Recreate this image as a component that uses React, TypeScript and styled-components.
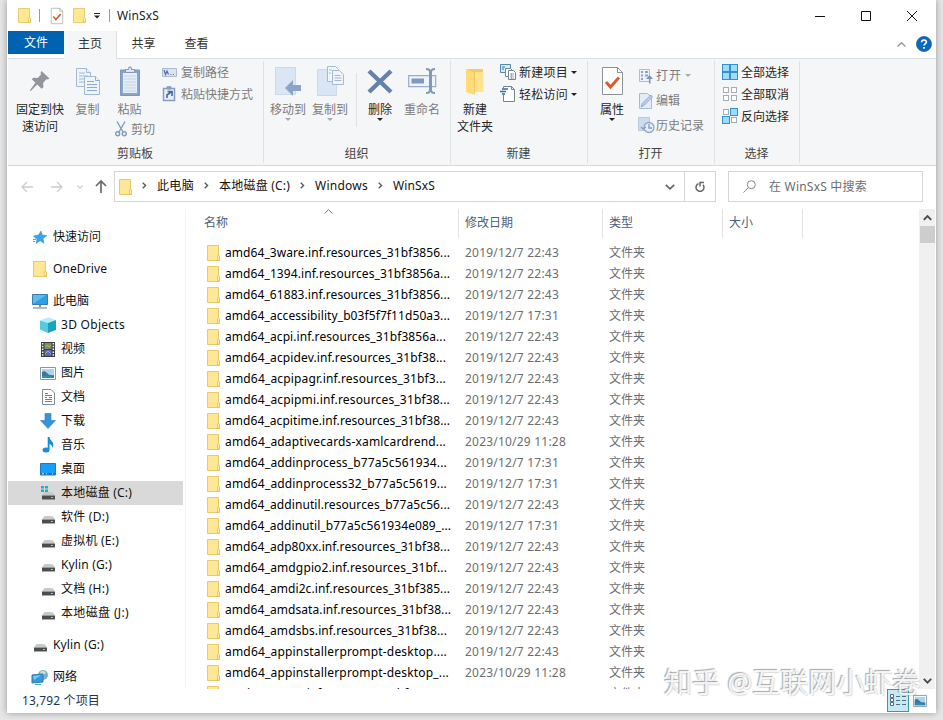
import React, { useLayoutEffect, useRef, useState } from "react";
import styled, { createGlobalStyle } from "styled-components";

const GlobalStyle = createGlobalStyle`
  * { box-sizing: border-box; }
  html, body { margin: 0; padding: 0; background: #e6e6e6; overflow: hidden; }
  body, #root { font-family: "Noto Sans", "Noto Sans CJK SC", sans-serif; font-size: 12px; color: #1c1c1c; }
  svg { display: block; flex: none; overflow: visible; }
`;

/* ---------- text that is tracked to a fixed measure ---------- */
const TextLine = styled.span<{ $w: number; $size?: number }>`
  display: block;
  flex: none;
  width: ${(p) => p.$w}px;
  font-size: ${(p) => p.$size ?? 12}px;
  white-space: pre;
  line-height: 17px;
`;

function Label({ w, size, children }: { w: number; size?: number; children: string }) {
  const ref = useRef<HTMLSpanElement>(null);
  const [tracking, setTracking] = useState(0);
  useLayoutEffect(() => {
    const el = ref.current;
    if (el) setTracking((w - el.getBoundingClientRect().width) / children.length);
  }, [w, size, children]);
  return (
    <TextLine $w={w} $size={size}>
      <span ref={ref} style={{ letterSpacing: `${tracking}px` }}>{children}</span>
    </TextLine>
  );
}

/* ---------- window ---------- */
const Desktop = styled.div`
  width: 943px;
  height: 720px;
  padding: 0 7px 7px 7px;
  background: #e6e6e6;
  overflow: hidden;
`;
const Window = styled.div`
  position: relative;
  width: 929px;
  height: 713px;
  padding-left: 1px;
  display: flex;
  flex-direction: column;
  background: #fff;
  box-shadow: 0 0 7px rgba(0, 0, 0, 0.35);
`;

const TitleBar = styled.header`
  display: flex;
  align-items: center;
  height: 31px;
  padding-left: 10px;
`;
const QuickTools = styled.div`
  display: flex;
  align-items: center;
  width: 99px;
`;
const ToolSlot = styled.div<{ $w: number }>`
  width: ${(p) => p.$w}px;
  display: flex;
  align-items: center;
  flex: none;
`;
const Tick = styled.i`
  width: 1px;
  height: 13px;
  background: #9b9b9b;
`;
const Caption = styled.div`
  display: flex;
  align-items: center;
  margin-left: auto;
  padding-right: 19px;
  gap: 36px;
`;

const TabBar = styled.nav`
  display: flex;
  align-items: flex-start;
  height: 27px;
  flex: none;
`;
const FileTab = styled.div`
  display: flex;
  justify-content: center;
  align-items: center;
  width: 56px;
  height: 23px;
  background: #0063b1;
  color: #fff;
`;
const Tab = styled.div<{ $active?: boolean; $w: number }>`
  display: flex;
  justify-content: center;
  align-items: center;
  width: ${(p) => p.$w}px;
  height: ${(p) => (p.$active ? 28 : 27)}px;
  padding-bottom: ${(p) => (p.$active ? 3 : 2)}px;
  background: ${(p) => (p.$active ? "#f5f6f7" : "transparent")};
  border-right: ${(p) => (p.$active ? "1px solid #dfe1e3" : "0")};
  color: #333;
  z-index: 1;
`;
const TabTools = styled.div`
  margin-left: auto;
  display: flex;
  align-items: center;
  gap: 10px;
  padding: 5px 4px 0 0;
`;

/* ---------- ribbon ---------- */
const Ribbon = styled.section`
  display: flex;
  height: 108px;
  flex: none;
  background: #f5f6f7;
  border-top: 1px solid #dcdfe1;
  border-bottom: 1px solid #d5d8da;
`;
const Group = styled.div<{ $w: number }>`
  width: ${(p) => p.$w}px;
  display: flex;
  flex-direction: column;
  height: 102px;
  margin-top: 2px;
  border-right: 1px solid #dfe2e4;
`;
const GroupBody = styled.div<{ $left: number }>`
  display: flex;
  height: 84px;
  padding-left: ${(p) => p.$left}px;
`;
const GroupName = styled.div`
  display: flex;
  justify-content: center;
  padding-right: 1px;
  color: #444;
`;
const BigButton = styled.div<{ $w: number; $dim?: boolean }>`
  width: ${(p) => p.$w}px;
  display: flex;
  flex: none;
  flex-direction: column;
  align-items: center;
  color: ${(p) => (p.$dim ? "#7c7c7c" : "#262626")};
`;
const BigIcon = styled.div`
  height: 40px;
  display: flex;
  align-items: center;
`;
const Stack = styled.div<{ $left?: number; $top?: number }>`
  display: flex;
  flex: none;
  flex-direction: column;
  margin-left: ${(p) => p.$left ?? 0}px;
  padding-top: ${(p) => p.$top ?? 0}px;
`;
const SmallButton = styled.div<{ $h?: number; $dim?: boolean; $gap?: number; $indent?: number }>`
  display: flex;
  align-items: center;
  height: ${(p) => p.$h ?? 22}px;
  gap: ${(p) => p.$gap ?? 3}px;
  padding-left: ${(p) => p.$indent ?? 0}px;
  color: ${(p) => (p.$dim ? "#7c7c7c" : "#262626")};
`;
const Rule = styled.i`
  width: 1px;
  height: 54px;
  margin: 12px 1px 0 5px;
  background: #dfe2e4;
`;

/* ---------- address row ---------- */
const AddressRow = styled.section`
  display: flex;
  align-items: center;
  height: 31px;
  margin-top: 5px;
  flex: none;
`;
const HistoryButtons = styled.div`
  display: flex;
  align-items: center;
  width: 106px;
  padding-left: 13px;
`;
const PathBox = styled.div`
  display: flex;
  width: 602px;
  height: 31px;
  border: 1px solid #d6d6d6;
  align-items: center;
  padding-left: 4px;
`;
const Crumb = styled.div`
  display: flex;
  align-items: center;
  padding-bottom: 2px;
  gap: 11px;
  margin-left: 10px;
  color: #111;
`;
const PathTools = styled.div`
  display: flex;
  align-items: center;
  height: 100%;
  margin-left: auto;
`;
const RefreshCell = styled.div`
  display: flex;
  align-items: center;
  justify-content: center;
  width: 31px;
  height: 100%;
  margin-left: 9px;
  border-left: 1px solid #d6d6d6;
`;
const SearchBox = styled.div`
  display: flex;
  align-items: center;
  gap: 13px;
  width: 195px;
  height: 31px;
  margin-left: 12px;
  padding-left: 14px;
  border: 1px solid #d6d6d6;
  color: #6d6d6d;
`;

/* ---------- body ---------- */
const Main = styled.main`
  display: flex;
  height: 480px;
  margin-top: 7px;
  flex: none;
`;
const Sidebar = styled.aside`
  width: 178px;
  height: 480px;
  padding-top: 16px;
  border-right: 1px solid #f3f3f3;
`;
const NavItem = styled.div<{ $level?: number; $space?: boolean; $on?: boolean }>`
  display: flex;
  align-items: center;
  width: 175px;
  height: 24px;
  margin-top: ${(p) => (p.$space ? 8 : 0)}px;
  padding-left: ${(p) => (p.$level ? 32 : 24)}px;
  background: ${(p) => (p.$on ? "#d9d9d9" : "transparent")};
  color: #111;
`;
const NavIcon = styled.div`
  width: 16px;
  margin-right: 5px;
  display: flex;
  justify-content: center;
  flex: none;
`;
const NavText = styled.div`
  padding-bottom: 2px;
`;
const Listing = styled.div`
  width: 733px;
  overflow: hidden;
`;
const Columns = styled.div`
  position: relative;
  display: grid;
  grid-template-columns: 273px 144px 120px 80px;
  height: 33px;
`;
const ColumnHead = styled.div<{ $pad: number }>`
  height: 29px;
  display: flex;
  align-items: center;
  padding-left: ${(p) => p.$pad}px;
  padding-bottom: 2px;
  border-right: 1px solid #e2e2e2;
  color: #4c607a;
`;
const SortMark = styled.div`
  position: absolute;
  left: 138px;
  top: 0;
`;
const FileRow = styled.div`
  display: grid;
  grid-template-columns: 18px 240px 144px 60px;
  align-items: center;
  height: 21px;
  margin-left: 21px;
  color: #6d6d6d;
`;
const FileName = styled.div`
  color: #000;
`;
const ScrollBar = styled.div`
  display: flex;
  flex-direction: column;
  align-items: center;
  width: 16px;
  background: #f0f0f0;
`;
const Thumb = styled.div`
  width: 15px;
  height: 17px;
  background: #cdcdcd;
`;
const ArrowCell = styled.div<{ $end?: boolean }>`
  display: flex;
  align-items: center;
  height: 17px;
  margin-top: ${(p) => (p.$end ? "auto" : "0")};
`;
const StatusBar = styled.footer`
  display: flex;
  align-items: center;
  height: 23px;
  padding: 0 9px 0 14px;
  color: #24364f;
`;
const ViewSwitch = styled.div`
  display: flex;
  align-items: center;
  gap: 4px;
  margin-left: auto;
`;
const DetailsView = styled.div`
  display: flex;
  align-items: center;
  justify-content: center;
  width: 22px;
  height: 23px;
  border: 1px solid #3c93b5;
  background: #c5e9f5;
`;
const Watermark = styled.div`
  position: absolute;
  left: 657px;
  top: 661px;
  color: rgba(255, 255, 255, 0.85);
  text-shadow: -1px -1px 1px rgba(100, 100, 100, 0.55), 1px 1px 1px rgba(140, 140, 140, 0.3);
  span { line-height: 42px; }
`;

/* ---------- icons ---------- */
const Folder = ({ w = 13, h = 16 }: { w?: number; h?: number }) => (
  <svg width={w} height={h} viewBox="0 0 13 16" preserveAspectRatio="none">
    <path d="M.5.5h11v10l1 1v4H.5z" fill="#ffe795" stroke="#e6ca6c" />
    <path d="M10.5 15v-4l1-1.2 1 1.2v4z" fill="#fff0b5" stroke="#e2bf58" strokeWidth=".8" />
  </svg>
);
const Down = ({ color = "#222" }: { color?: string }) => (
  <svg width="6" height="3" viewBox="0 0 6 3"><path d="M0 0h6L3 3z" fill={color} /></svg>
);
const Chevron = ({ d, w, h, color = "#555", s = 1.3 }: { d: string; w: number; h: number; color?: string; s?: number }) => (
  <svg width={w} height={h} viewBox={`0 0 ${w} ${h}`} fill="none" stroke={color} strokeWidth={s}><path d={d} /></svg>
);
const Next = () => <Chevron d="M.7.7 3.6 3.5.7 6.3" w={4} h={7} color="#555" />;

const CheckDoc = ({ w, h, s = 1.6 }: { w: number; h: number; s?: number }) => (
  <svg width={w} height={h} viewBox="0 0 21 28" preserveAspectRatio="none" fill="none">
    <path d="M.5.5h15l5 5v22H.5z" fill="#fff" stroke="#8d9298" />
    <path d="M15.500.5v5h5" stroke="#8d9298" />
    <path d="m4 15 4.500 5L17 10.500" stroke="#e0592a" strokeWidth={s * 1.8} />
  </svg>
);
const Pin = () => (
  <svg width="22" height="22" viewBox="0 0 22 22">
    <path d="m12.500 1 8 7.500-1.800 1-1.400-.3-3.200 3.900.3 4.200-1.800 1.500-4.400-4.200L1.800 21 .9 20.300l5.500-7.500-3.600-3.500 1.600-1.500 4.300.2L12 4.600l-.4-1.900z" fill="#929599" />
  </svg>
);
const CopyPages = () => (
  <svg width="26" height="29" viewBox="0 0 26 29" fill="#eff4fb" stroke="#a4b9d4">
    <path d="M1.500 1.500h10l4 4v14h-14z" /><path d="M11.500 1.500v4h4M4 6h6M4 9h9M4 12h9M4 15h9" />
    <path d="M9.500 9.500h11l4 4v14h-15z" /><path d="M20.500 9.500v4h4M12 14.500h7M12 17.500h10M12 20.500h10M12 23.500h10" stroke="#91a9ca" />
  </svg>
);
const Clipboard = () => (
  <svg width="20" height="30" viewBox="0 0 20 30">
    <path d="M.5 4h19v25.500H.5z" fill="#8ba3c4" stroke="#7f97b8" />
    <path d="M3 7h14v20H3z" fill="#e6edf7" />
    <path d="M4 10h12M4 13h12M4 16h12M4 19h12M4 22h12M4 25h12" stroke="#c4d2e6" />
    <path d="M5.500 6.500v-3h3l.5-2.500h2l.5 2.500h3v3z" fill="#dfe5ee" stroke="#8298b6" />
  </svg>
);
const Scissors = () => (
  <svg width="12" height="16" viewBox="0 0 12 16" fill="none" stroke="#829bbd" strokeWidth="1.400">
    <path d="M2 .5 8 11M10 .5 4 11" /><circle cx="2.700" cy="12.800" r="2" /><circle cx="9.300" cy="12.800" r="2" />
  </svg>
);
const PathIcon = () => (
  <svg width="15" height="9" viewBox="0 0 15 9" fill="none">
    <path d="M.5.5h14v8H.5z" fill="#d9e4f4" stroke="#a9bbd4" /><path d="m2 2 1.500 4.500L5 3l1.500 3.500M8.500 6.500h1M11 6.500h1" stroke="#53719c" strokeWidth="1.200" />
  </svg>
);
const ShortcutIcon = () => (
  <svg width="15" height="16" viewBox="0 0 15 16" fill="none" stroke="#849fc3">
    <path d="M1.500 2.500h11v12h-11z" fill="#e7eef8" strokeWidth="1.500" /><path d="M5 3V.7h4V3z" fill="#8aa0c0" />
    <path d="M5 12V9l4-3M5.500 5.500H10V10" stroke="#44689b" strokeWidth="1.600" />
  </svg>
);
const MoveTo = () => (
  <svg width="27" height="29" viewBox="0 0 27 29"><path d="M.5.5h20v27H.5z" fill="#dbe6f4" stroke="#cbd9eb" /><path d="m10 21 8-8v5h8v6h-8v5z" fill="#8ca4c7" /></svg>
);
const CopyTo = () => (
  <svg width="27" height="31" viewBox="0 0 27 31" fill="#f1f5fb" stroke="#a5b9d4">
    <path d="M.5 3.500h19v26H.5z" fill="#dbe6f4" stroke="#cbd9eb" />
    <path d="M10.500.5h8l3 3v12h-11z" /><path d="M15.500 4.500h7l4 4v10h-11z" />
    <path d="M12 4h3M12 7h2M17.500 9.500h6M17.500 12h7M17.500 14.500h7" />
  </svg>
);
const DeleteX = () => (
  <svg width="26" height="25" viewBox="0 0 26 25" stroke="#6682ac" strokeWidth="4.400"><path d="m2 2 22 21M24 2 2 23" /></svg>
);
const Rename = () => (
  <svg width="29" height="26" viewBox="0 0 29 26" fill="none">
    <path d="M.7 7.700h27v11H.7z" fill="#eef4fc" stroke="#94aed0" strokeWidth="1.200" /><path d="M3.500 10.500H16v5H3.500z" fill="#8099c1" />
    <path d="M18 1q4 0 4 3v18q0 3-4 3M27 1q-4 0-4 3v18q0 3 4 3" stroke="#8498b3" strokeWidth="2" />
  </svg>
);
const NewFolder = () => (
  <svg width="18" height="27" viewBox="0 0 18 27"><path d="M1 1h16v22l-5 1z" fill="#f3cb60" /><path d="M9 4h8.500v20H9z" fill="#ffe38f" /><path d="m0 1 8.500 4v22L0 24z" fill="#ffdc78" /><path d="M8.500 5v21" stroke="#edc256" strokeWidth=".8" /></svg>
);
const NewItem = () => (
  <svg width="16" height="16" viewBox="0 0 16 16" fill="#fff">
    <path d="M.5.5h10v8H.5z" fill="#d7eafa" stroke="#5286ad" /><path d="M2 3h3M2 5h2" stroke="#3e7299" />
    <path d="M5.500 4.500h5l2 2v6h-7z" stroke="#76848f" /><path d="M8.500 6.500h5l2 2v7h-7z" stroke="#76848f" /><path d="M10 10h4M10 12h4M10 14h4M11.500 9v6" stroke="#a3adb5" />
  </svg>
);
const EasyAccess = () => (
  <svg width="16" height="16" viewBox="0 0 16 16" fill="none">
    <path d="M3.500 2V.5h8l3 3v12h-11V9M11.500.5v3h3" fill="#fff" stroke="#76848f" /><path d="M2 3h6M0 5.500h6M2 8h3" stroke="#2d6f9d" strokeWidth="1.300" />
  </svg>
);
const OpenIcon = () => (
  <svg width="15" height="16" viewBox="0 0 15 16" fill="none">
    <path d="M1.500 1.500h10v12h-10z" fill="#edf2fb" stroke="#aabddb" /><path d="M3 3h2v2H3zM3 6.500h2v2H3zM3 10h2v2H3zM7 3h3v2H7zM7 6.500h3v2H7z" fill="#8ba3cd" /><path d="M11 15.500V11H8l3.500-4L15 11h-2.500v4.500z" fill="#7993be" />
  </svg>
);
const EditIcon = () => (
  <svg width="15" height="16" viewBox="0 0 15 16" fill="none">
    <path d="M1.500.5h8l4 4v11h-12z" fill="#e4ecf8" stroke="#a6bad8" /><path d="m3 14 1.500-4L13 2l1.500 2-8 8z" fill="#bfcee6" stroke="#899fc2" strokeWidth=".8" />
  </svg>
);
const HistoryIcon = () => (
  <svg width="17" height="17" viewBox="0 0 17 17" fill="none">
    <path d="M.5.5h11v13H.5z" fill="#cddbef" stroke="#bac9de" /><circle cx="11" cy="10.500" r="5" fill="#e7eef9" stroke="#91a6c7" strokeWidth="1.300" /><path d="M11 7v4h3M3 10l2 2 3-2" stroke="#829bc2" strokeWidth="1.300" />
  </svg>
);
const Squares = ({ on }: { on: string }) => (
  <svg width="16" height="16" viewBox="0 0 16 16">
    {[[0, 0], [8, 0], [0, 8], [8, 8]].map(([x, y], i) =>
      on[i] === "1" ? (
        <rect key={i} x={x + 0.5} y={y + 0.5} width="7" height="7" fill="#9edafa" stroke="#3292c9" />
      ) : (
        <rect key={i} x={x + 1.5} y={y + 1.5} width="5" height="5" fill="#fff" stroke="#a9adb1" />
      )
    )}
  </svg>
);

const Star = () => (
  <svg width="14" height="13" viewBox="0 0 14 13"><path d="m8 0 1.200 4L14 4.500l-4 3 1 4.700-3.800-2.500L3 12.500l1-4L.5 5 5.500 4z" fill="#36a6e8" stroke="#2488c9" strokeWidth=".5" /><path d="M0 8.500h3M0 10.500h2" stroke="#4aa8df" /></svg>
);
const Monitor = () => (
  <svg width="16" height="15" viewBox="0 0 16 15"><path d="M.5.5h15v10H.5z" fill="#2f9fe4" stroke="#3c7da6" /><path d="M1 10 14 1H1z" fill="#74c6f4" opacity=".7" /><path d="M7 11h2v2H7z" fill="#7f95a3" /><path d="M1 13.900h14" stroke="#8099a7" strokeWidth="1.300" /></svg>
);
const Cube = () => (
  <svg width="16" height="16" viewBox="0 0 16 16"><path d="m0 3.500 8-3 8 2.500-8 3z" fill="#b3edf5" /><path d="m0 3.500 8 2.500V16l-8-3.500z" fill="#57cadd" /><path d="m8 6 8-3v10L8 16z" fill="#1ba3be" /></svg>
);
const Film = () => (
  <svg width="14" height="15" viewBox="0 0 14 15"><path d="M0 0h14v15H0z" fill="#3b3b42" /><path d="M3.500 1h7v6h-7z" fill="#7f8d5d" /><path d="M3.500 8h7v6h-7z" fill="#596bbb" /><path d="M4 5l2-2 2 2 2-2M4 12l3-3 3 3" stroke="#c9bc6c" fill="none" strokeWidth=".8" /><path d="M1.700 1v14M12.300 1v14" stroke="#f5f5f5" strokeWidth="1.500" strokeDasharray="1.500 1.300" /></svg>
);
const Picture = ({ w = 16, h = 13 }: { w?: number; h?: number }) => (
  <svg width={w} height={h} viewBox="0 0 16 13" preserveAspectRatio="none"><path d="M.5.5h15v12H.5z" fill="#fff" stroke="#8b969d" /><path d="M2 2h12v9H2z" fill="#a9d5ef" /><path d="M2 5q3-2 5 1t7 2v3H2z" fill="#417291" /><path d="M2 9q5-2 12 1v1H2z" fill="#2d8bb8" /></svg>
);
const Doc = () => (
  <svg width="13" height="16" viewBox="0 0 13 16"><path d="M.5.5h8.500l3.500 3.500v11.500H.5z" fill="#fff" stroke="#7e8b95" /><path d="M3 4.500h3M3 6.500h7M3 8.500h2M7 8.500h3M3 10.500h7M3 12.500h7" stroke="#388dc2" /></svg>
);
const Download = () => <svg width="16" height="16" viewBox="0 0 16 16"><path d="M5 .5h6v7h4.500L8 15.500.5 7.500H5z" fill="#3393dc" stroke="#4c87ba" strokeWidth=".7" /></svg>;
const Music = () => (
  <svg width="12" height="16" viewBox="0 0 12 16"><ellipse cx="4" cy="13" rx="3.500" ry="2.500" fill="#158ee0" /><path d="M5.700 0h1.800q0 2.500 2.500 4.500 2.500 2.500.5 6.500-.1-3-3-4v6H5.700z" fill="#158ee0" /></svg>
);
const DesktopIcon = () => (
  <svg width="16" height="13" viewBox="0 0 16 13"><path d="M.5.5h15v11.500H.5z" fill="#179ffa" stroke="#2b78af" /><path d="M1 10.800h14" stroke="#1c5d92" /><path d="M2 10.800h2M6 10.800h1M12 10.800h1" stroke="#d8efff" /></svg>
);
const Drive = ({ system }: { system?: boolean }) => (
  <svg width="13" height="14" viewBox="0 0 13 14">
    <path d="M2.500 6h8L13 9.500H0z" fill="#c8c9c9" /><path d="M0 9.500h13v4H0z" fill="#4b504f" /><path d="M9 11.500h2" stroke="#63e29a" />
    {system && <path d="M-1 0h3v2.500h-3zM3 0h3v2.500H3zM-1 3.500h3V6h-3zM3 3.500h3V6H3z" fill="#20aecf" />}
  </svg>
);
const Network = () => (
  <svg width="17" height="15" viewBox="0 0 17 15"><circle cx="11" cy="5" r="5" fill="#80aebe" /><path d="M8 2q4-3 6 1l-4 3z" fill="#c5dfd9" /><path d="m0 5 11-1v8L0 13z" fill="#3199de" stroke="#2e7bb3" /><path d="M1 6 9 5 2 10z" fill="#7dcbf3" /><path d="M3 14.500h6" stroke="#54a1bb" /></svg>
);

const navItems: { icon: React.ReactNode; text: string; w: number; level?: number; space?: boolean; on?: boolean }[] = [
  { icon: <Star />, text: "快速访问", w: 48 },
  { icon: <Folder w={14} />, text: "OneDrive", w: 54, space: true },
  { icon: <Monitor />, text: "此电脑", w: 36, space: true },
  { icon: <Cube />, text: "3D Objects", w: 64, level: 1 },
  { icon: <Film />, text: "视频", w: 24, level: 1 },
  { icon: <Picture />, text: "图片", w: 24, level: 1 },
  { icon: <Doc />, text: "文档", w: 24, level: 1 },
  { icon: <Download />, text: "下载", w: 24, level: 1 },
  { icon: <Music />, text: "音乐", w: 24, level: 1 },
  { icon: <DesktopIcon />, text: "桌面", w: 24, level: 1 },
  { icon: <Drive system />, text: "本地磁盘 (C:)", w: 71, level: 1, on: true },
  { icon: <Drive />, text: "软件 (D:)", w: 48, level: 1 },
  { icon: <Drive />, text: "虚拟机 (E:)", w: 58, level: 1 },
  { icon: <Drive />, text: "Kylin (G:)", w: 51, level: 1 },
  { icon: <Drive />, text: "文档 (H:)", w: 48, level: 1 },
  { icon: <Drive />, text: "本地磁盘 (J:)", w: 68, level: 1 },
  { icon: <Drive />, text: "Kylin (G:)", w: 51, space: true },
  { icon: <Network />, text: "网络", w: 24, space: true },
];

const A = "2019/12/7 22:43";
const B = "2019/12/7 17:31";
const C = "2023/10/29 11:28";
const files: [string, string, number][] = [
  ["amd64_3ware.inf.resources_31bf3856...", A, 225],
  ["amd64_1394.inf.resources_31bf3856a...", A, 225],
  ["amd64_61883.inf.resources_31bf3856...", A, 225],
  ["amd64_accessibility_b03f5f7f11d50a3...", B, 225],
  ["amd64_acpi.inf.resources_31bf3856a...", A, 221],
  ["amd64_acpidev.inf.resources_31bf38...", A, 221],
  ["amd64_acpipagr.inf.resources_31bf3...", A, 221],
  ["amd64_acpipmi.inf.resources_31bf38...", A, 225],
  ["amd64_acpitime.inf.resources_31bf38...", A, 225],
  ["amd64_adaptivecards-xamlcardrend...", C, 221],
  ["amd64_addinprocess_b77a5c561934...", B, 222],
  ["amd64_addinprocess32_b77a5c5619...", B, 222],
  ["amd64_addinutil.resources_b77a5c56...", A, 225],
  ["amd64_addinutil_b77a5c561934e089_...", B, 226],
  ["amd64_adp80xx.inf.resources_31bf38...", A, 225],
  ["amd64_amdgpio2.inf.resources_31bf...", A, 222],
  ["amd64_amdi2c.inf.resources_31bf385...", A, 225],
  ["amd64_amdsata.inf.resources_31bf38...", A, 226],
  ["amd64_amdsbs.inf.resources_31bf38...", A, 222],
  ["amd64_appinstallerprompt-desktop....", A, 222],
  ["amd64_appinstallerprompt-desktop_...", C, 224],
  ["amd64_arcsas.inf.resources_31bf3856a...", A, 226],
];

export default function App() {
  return (
    <Desktop>
      <GlobalStyle />
      <Window>
        <TitleBar>
          <QuickTools>
            <ToolSlot $w={21}><Folder w={13} h={15} /></ToolSlot>
            <ToolSlot $w={12}><Tick /></ToolSlot>
            <ToolSlot $w={22}><CheckDoc w={12} h={16} /></ToolSlot>
            <ToolSlot $w={20}><Folder w={13} h={15} /></ToolSlot>
            <ToolSlot $w={16}>
              <svg width="8" height="6" viewBox="0 0 8 6"><path d="M1 .5h6" stroke="#222" /><path d="M1 2.500h6l-3 3z" fill="#222" /></svg>
            </ToolSlot>
            <Tick />
          </QuickTools>
          <Label w={42}>WinSxS</Label>
          <Caption>
            <svg width="10" height="10"><path d="M0 5.500h10" stroke="#111" /></svg>
            <svg width="10" height="10"><path d="M.5.5h9v9h-9z" fill="none" stroke="#111" /></svg>
            <svg width="10" height="10"><path d="m0 0 10 10M10 0 0 10" stroke="#111" /></svg>
          </Caption>
        </TitleBar>
        <TabBar>
          <FileTab><Label w={24}>文件</Label></FileTab>
          <Tab $active $w={53}><Label w={24}>主页</Label></Tab>
          <Tab $w={53}><Label w={24}>共享</Label></Tab>
          <Tab $w={53}><Label w={24}>查看</Label></Tab>
          <TabTools>
            <Chevron d="M.5 4.500 4.500.7l4 3.800" w={9} h={5} color="#929292" s={1.2} />
            <svg width="16" height="16" viewBox="0 0 16 16"><circle cx="8" cy="8" r="7.600" fill="#0969bd" stroke="#0b5593" strokeWidth=".6" /><path d="M5.600 6.200c.1-3 4.900-2.900 4.800 0 0 1.400-2.300 1.600-2.300 3.400M8 11v1.800" stroke="#fff" strokeWidth="1.700" fill="none" /></svg>
          </TabTools>
        </TabBar>
        <Ribbon>
          <Group $w={256}>
            <GroupBody $left={4}>
              <BigButton $w={56}><BigIcon><Pin /></BigIcon><Label w={48}>固定到快</Label><Label w={36}>速访问</Label></BigButton>
              <BigButton $w={39} $dim><BigIcon><CopyPages /></BigIcon><Label w={24}>复制</Label></BigButton>
              <Stack $left={-3}>
                <BigButton $w={51} $dim><BigIcon><Clipboard /></BigIcon><Label w={24}>粘贴</Label></BigButton>
                <SmallButton $dim $gap={4} $indent={11}><Scissors /><Label w={24}>剪切</Label></SmallButton>
              </Stack>
              <Stack $left={7}>
                <SmallButton $dim $gap={4}><PathIcon /><Label w={48}>复制路径</Label></SmallButton>
                <SmallButton $dim $gap={4}><ShortcutIcon /><Label w={72}>粘贴快捷方式</Label></SmallButton>
              </Stack>
            </GroupBody>
            <GroupName><Label w={36}>剪贴板</Label></GroupName>
          </Group>
          <Group $w={187}>
            <GroupBody $left={3}>
              <BigButton $w={42} $dim><BigIcon><MoveTo /></BigIcon><Label w={36}>移动到</Label><Down color="#aaa" /></BigButton>
              <BigButton $w={42} $dim><BigIcon><CopyTo /></BigIcon><Label w={36}>复制到</Label><Down color="#aaa" /></BigButton>
              <Rule />
              <BigButton $w={44}><BigIcon><DeleteX /></BigIcon><Label w={24}>删除</Label><Down /></BigButton>
              <BigButton $w={40} $dim><BigIcon><Rename /></BigIcon><Label w={36}>重命名</Label></BigButton>
            </GroupBody>
            <GroupName><Label w={24}>组织</Label></GroupName>
          </Group>
          <Group $w={137}>
            <GroupBody $left={4}>
              <BigButton $w={40}><BigIcon><NewFolder /></BigIcon><Label w={24}>新建</Label><Label w={36}>文件夹</Label></BigButton>
              <Stack $left={5}>
                <SmallButton><NewItem /><Label w={49}>新建项目</Label><Down /></SmallButton>
                <SmallButton><EasyAccess /><Label w={49}>轻松访问</Label><Down /></SmallButton>
              </Stack>
            </GroupBody>
            <GroupName><Label w={24}>新建</Label></GroupName>
          </Group>
          <Group $w={127}>
            <GroupBody $left={4}>
              <BigButton $w={40}><BigIcon><CheckDoc w={21} h={28} /></BigIcon><Label w={24}>属性</Label><Down /></BigButton>
              <Stack $left={6} $top={2}>
                <SmallButton $h={25} $dim><OpenIcon /><Label w={26}>打开</Label><Down color="#aaa" /></SmallButton>
                <SmallButton $h={25} $dim><EditIcon /><Label w={24}>编辑</Label></SmallButton>
                <SmallButton $h={25} $dim $gap={1}><HistoryIcon /><Label w={48}>历史记录</Label></SmallButton>
              </Stack>
            </GroupBody>
            <GroupName><Label w={24}>打开</Label></GroupName>
          </Group>
          <Group $w={85}>
            <GroupBody $left={7}>
              <Stack>
                <SmallButton><Squares on="1111" /><Label w={48}>全部选择</Label></SmallButton>
                <SmallButton><Squares on="0000" /><Label w={48}>全部取消</Label></SmallButton>
                <SmallButton><Squares on="0110" /><Label w={48}>反向选择</Label></SmallButton>
              </Stack>
            </GroupBody>
            <GroupName><Label w={24}>选择</Label></GroupName>
          </Group>
        </Ribbon>

        <AddressRow>
          <HistoryButtons>
            <ToolSlot $w={30}><Chevron d="M6 1 1 6l5 5M1 6h11" w={12} h={12} color="#cdcdcd" /></ToolSlot>
            <ToolSlot $w={26}><Chevron d="m6 1 5 5-5 5M11 6H0" w={12} h={12} color="#cdcdcd" /></ToolSlot>
            <ToolSlot $w={18}><Chevron d="m.5.5 2.500 2.500L5.500.5" w={6} h={4} color="#cdcdcd" /></ToolSlot>
            <Chevron d="m1 6 5-5 5 5M6 1v12" w={12} h={13} color="#6a6a6a" s={1.7} />
          </HistoryButtons>
          <PathBox>
            <Folder w={13} h={16} />
            <Crumb><Next /><Label w={37}>此电脑</Label></Crumb>
            <Crumb><Next /><Label w={71}>本地磁盘 (C:)</Label></Crumb>
            <Crumb><Next /><Label w={53}>Windows</Label></Crumb>
            <Crumb><Next /><Label w={42}>WinSxS</Label></Crumb>
            <PathTools>
              <Chevron d="m.8.8 4.200 4 4.200-4" w={10} h={6} color="#666" s={1.8} />
              <RefreshCell>
                <svg width="10" height="12" viewBox="0 0 10 12" fill="none" stroke="#666" strokeWidth="1.500"><path d="M6.500 2.600A4 4 0 1 1 2 3.700M1 1.500h4v4" transform="matrix(-1 0 0 1 10 0)" /></svg>
              </RefreshCell>
            </PathTools>
          </PathBox>
          <SearchBox>
            <svg width="13" height="13" viewBox="0 0 13 13" fill="none" stroke="#888"><circle cx="8.300" cy="4.700" r="4" /><path d="M5.500 7.500.5 12.500" /></svg>
            <Label w={98}>在 WinSxS 中搜索</Label>
          </SearchBox>
        </AddressRow>

        <Main>
          <Sidebar>
            {navItems.map((n, i) => (
              <NavItem key={i} $level={n.level} $space={n.space} $on={n.on}>
                <NavIcon>{n.icon}</NavIcon>
                <NavText><Label w={n.w}>{n.text}</Label></NavText>
              </NavItem>
            ))}
          </Sidebar>
          <Listing>
            <Columns>
              <ColumnHead $pad={18}><Label w={24}>名称</Label></ColumnHead>
              <ColumnHead $pad={6}><Label w={48}>修改日期</Label></ColumnHead>
              <ColumnHead $pad={6}><Label w={24}>类型</Label></ColumnHead>
              <ColumnHead $pad={6}><Label w={24}>大小</Label></ColumnHead>
              <SortMark><Chevron d="M.5 4.500 4.500.7l4 3.800" w={9} h={5} color="#777" s={1} /></SortMark>
            </Columns>
            {files.map(([name, date, w]) => (
              <FileRow key={name}>
                <Folder w={13} h={16} />
                <FileName><Label w={w}>{name}</Label></FileName>
                <Label w={date === C ? 101 : 94}>{date}</Label>
                <Label w={36}>文件夹</Label>
              </FileRow>
            ))}
          </Listing>
          <ScrollBar>
            <ArrowCell><Chevron d="m.8 4.800 3.700-3.800 3.700 3.800" w={9} h={6} color="#4b4b4b" s={1.9} /></ArrowCell>
            <Thumb />
            <ArrowCell $end><Chevron d="m.8.8 3.700 3.800L8.200.8" w={9} h={6} color="#4b4b4b" s={1.9} /></ArrowCell>
          </ScrollBar>
        </Main>
        <StatusBar>
          <Label w={78}>13,792 个项目</Label>
          <ViewSwitch>
            <DetailsView>
              <svg width="16" height="13" viewBox="0 0 16 13" fill="none" stroke="#536d7a"><path d="M.5.5h3v3h-3zM.5 4.500h3v3h-3zM.5 8.500h3v3h-3z" fill="#fff" /><path d="M6 2.500h4M12 2.500h4M6 6.500h4M12 6.500h4M6 10.500h4M12 10.500h4" /></svg>
            </DetailsView>
            <Picture w={14} h={12} />
          </ViewSwitch>
        </StatusBar>
        <Watermark><Label w={256} size={28}>知乎 @互联网小虾卷</Label></Watermark>
      </Window>
    </Desktop>
  );
}
